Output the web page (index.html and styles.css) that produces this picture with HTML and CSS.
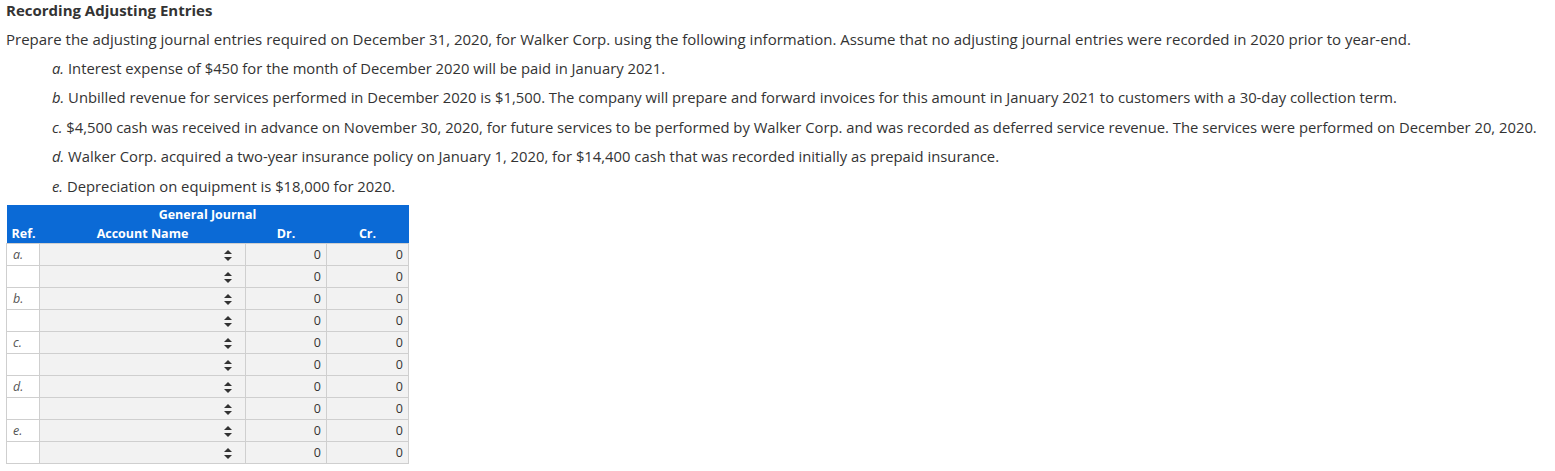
FILE: index.html
```html
<!DOCTYPE html>
<html>
<head>
<meta charset="utf-8">
<link rel="stylesheet" href="styles.css">
</head>
<body>
<h1 class="title">Recording Adjusting Entries</h1>
<p class="intro">Prepare the adjusting journal entries required on December 31, 2020, for Walker Corp. using the following information. Assume that no adjusting journal entries were recorded in 2020 prior to year-end.</p>
<ul class="items">
  <li><i>a.</i> Interest expense of $450 for the month of December 2020 will be paid in January 2021.</li>
  <li><i>b.</i> Unbilled revenue for services performed in December 2020 is $1,500. The company will prepare and forward invoices for this amount in January 2021 to customers with a 30-day collection term.</li>
  <li><i>c.</i> $4,500 cash was received in advance on November 30, 2020, for future services to be performed by Walker Corp. and was recorded as deferred service revenue. The services were performed on December 20, 2020.</li>
  <li><i>d.</i> Walker Corp. acquired a two-year insurance policy on January 1, 2020, for $14,400 cash that was recorded initially as prepaid insurance.</li>
  <li><i>e.</i> Depreciation on equipment is $18,000 for 2020.</li>
</ul>
<table class="journal">
  <colgroup>
    <col class="c-ref"><col class="c-acct"><col class="c-dr"><col class="c-cr">
  </colgroup>
  <thead>
    <tr><th colspan="4" class="caption">General Journal</th></tr>
    <tr><th class="ref">Ref.</th><th class="acct">Account Name</th><th class="num">Dr.</th><th class="num">Cr.</th></tr>
  </thead>
  <tbody>
    <tr><td class="ref">a.</td><td class="acct"><span class="sel"></span></td><td class="num">0</td><td class="num">0</td></tr>
    <tr><td class="ref"></td><td class="acct"><span class="sel"></span></td><td class="num">0</td><td class="num">0</td></tr>
    <tr><td class="ref">b.</td><td class="acct"><span class="sel"></span></td><td class="num">0</td><td class="num">0</td></tr>
    <tr><td class="ref"></td><td class="acct"><span class="sel"></span></td><td class="num">0</td><td class="num">0</td></tr>
    <tr><td class="ref">c.</td><td class="acct"><span class="sel"></span></td><td class="num">0</td><td class="num">0</td></tr>
    <tr><td class="ref"></td><td class="acct"><span class="sel"></span></td><td class="num">0</td><td class="num">0</td></tr>
    <tr><td class="ref">d.</td><td class="acct"><span class="sel"></span></td><td class="num">0</td><td class="num">0</td></tr>
    <tr><td class="ref"></td><td class="acct"><span class="sel"></span></td><td class="num">0</td><td class="num">0</td></tr>
    <tr><td class="ref">e.</td><td class="acct"><span class="sel"></span></td><td class="num">0</td><td class="num">0</td></tr>
    <tr><td class="ref"></td><td class="acct"><span class="sel"></span></td><td class="num">0</td><td class="num">0</td></tr>
  </tbody>
</table>
</body>
</html>
```
FILE: styles.css
```css
html, body {
  margin: 0;
  background: #fff;
}
body {
  padding: 0 6px;
  font-family: "Open Sans", "DejaVu Sans", sans-serif;
  font-size: 14.8px;
  color: #333;
}
.title {
  margin: 0;
  padding-top: 0;
  font-size: 15px;
  font-weight: 700;
  line-height: 20px;
}
.intro {
  margin: 9px 0 0 0;
  font-size: 15px;
  line-height: 20px;
}
.items {
  list-style: none;
  margin: 0;
  padding: 0 0 0 46px;
  white-space: nowrap;
}
.items li {
  line-height: 20px;
  margin-top: 9.5px;
}
.items li:first-child {
  margin-top: 8.5px;
}
.journal {
  margin-top: 9px;
  border-collapse: collapse;
  font-size: 12.5px;
  width: 402px;
  table-layout: fixed;
}
.c-ref { width: 33px; }
.c-acct { width: 206px; }
.c-dr { width: 81px; }
.c-cr { width: 82px; }
.journal thead {
  background: #0b6ad6;
  color: #fff;
}
.journal th {
  font-weight: 700;
  height: 19px;
  padding: 0;
  line-height: 17px;
  vertical-align: middle;
  text-align: center;
}
.journal th.ref {
  text-align: left;
  padding-left: 5px;
}
.journal td {
  border: 1px solid #cfcfcf;
  height: 21px;
  padding: 0 5px;
  background: #f2f2f2;
  color: #333;
}
.journal td.ref {
  background: #fff;
  font-style: italic;
  color: #555;
  padding-left: 6px;
}
.journal td.num {
  text-align: right;
}
.journal td.acct {
  text-align: right;
  padding-right: 13px;
}
.sel {
  display: inline-block;
  width: 8px;
  height: 11px;
  position: relative;
  vertical-align: middle;
}
.sel::before, .sel::after {
  content: "";
  position: absolute;
  left: 0;
  border-left: 4px solid transparent;
  border-right: 4px solid transparent;
}
.sel::before {
  top: 0;
  border-bottom: 4px solid #333;
}
.sel::after {
  bottom: 0;
  border-top: 4px solid #333;
}
```
